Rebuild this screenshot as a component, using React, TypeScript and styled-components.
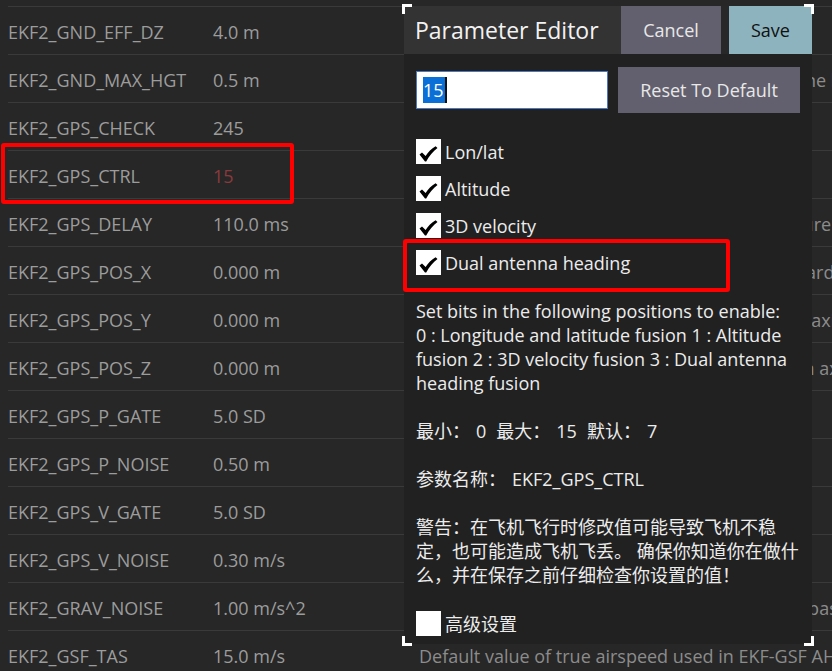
import React from 'react'
import styled, { createGlobalStyle } from 'styled-components'

const GlobalStyle = createGlobalStyle`
  html, body {
    margin: 0;
    padding: 0;
    background: #272727;
    overflow: hidden;
  }
  body {
    font-family: "Open Sans", "Noto Sans CJK SC", sans-serif;
  }
`

type Param = { name: string; value: string; desc: string; modified?: boolean }

const params: Param[] = [
  { name: 'EKF2_GND_EFF_DZ', value: '4.0 m', desc: 'Baro deadzone range for height fusion' },
  { name: 'EKF2_GND_MAX_HGT', value: '0.5 m', desc: 'Maximum height above ground allowed for zone based range aid mode' },
  { name: 'EKF2_GPS_CHECK', value: '245', desc: 'Integer bitmask controlling GPS checks' },
  { name: 'EKF2_GPS_CTRL', value: '15', desc: 'GNSS sensor aiding', modified: true },
  { name: 'EKF2_GPS_DELAY', value: '110.0 ms', desc: 'GPS measurement delay relative to IMU measurements' },
  { name: 'EKF2_GPS_POS_X', value: '0.000 m', desc: 'X position of GPS antenna in body frame (forward axis with origin relative to vehicle centre of gravity)' },
  { name: 'EKF2_GPS_POS_Y', value: '0.000 m', desc: 'Y position of GPS antenna in body frame (right axis with origin relative to vehicle centre of gravity)' },
  { name: 'EKF2_GPS_POS_Z', value: '0.000 m', desc: 'Z position of GPS antenna in body frame (down axis with origin relative to vehicle centre of gravity)' },
  { name: 'EKF2_GPS_P_GATE', value: '5.0 SD', desc: 'Gate size for GNSS position fusion' },
  { name: 'EKF2_GPS_P_NOISE', value: '0.50 m', desc: 'Measurement noise for GNSS position' },
  { name: 'EKF2_GPS_V_GATE', value: '5.0 SD', desc: 'Gate size for GNSS velocity fusion' },
  { name: 'EKF2_GPS_V_NOISE', value: '0.30 m/s', desc: 'Measurement noise for GNSS velocity' },
  { name: 'EKF2_GRAV_NOISE', value: '1.00 m/s^2', desc: 'Accelerometer measurement noise for gravity based observations' },
  { name: 'EKF2_GSF_TAS', value: '15.0 m/s', desc: 'Default value of true airspeed used in EKF-GSF AHRS calculation' },
]

const bits = [
  { label: 'Lon/lat', checked: true },
  { label: 'Altitude', checked: true },
  { label: '3D velocity', checked: true },
  { label: 'Dual antenna heading', checked: true },
]

function CheckMark() {
  return (
    <svg width="19" height="16" viewBox="0 0 19 16">
      <path d="M0.5 8.6 L3 6.4 L6.6 10 C9 6.4 12.5 2.6 16.6 0.3 L18.5 2 C14 5.4 10.2 10 7.2 15.6 L6 15.6 Z" fill="#000" />
    </svg>
  )
}

export default function App() {
  return (
    <>
      <GlobalStyle />
      <Screen>
        <ParamList>
          {params.map(p => (
            <ParamRow key={p.name}>
              <ParamName>{p.name}</ParamName>
              <ParamValue $modified={p.modified}>{p.value}</ParamValue>
              <ParamDesc>{p.desc}</ParamDesc>
            </ParamRow>
          ))}
        </ParamList>

        <Highlight style={{ left: 1, top: 143, width: 293, height: 61 }} />

        <Dialog>
          <Header>
            <Title>Parameter Editor</Title>
            <HeaderButton>Cancel</HeaderButton>
            <HeaderButton $primary>Save</HeaderButton>
          </Header>
          <Body>
            <EditRow>
              <ValueField>
                <Selected>15</Selected>
              </ValueField>
              <ResetButton>Reset To Default</ResetButton>
            </EditRow>

            <BitList>
              {bits.map(b => (
                <CheckRow key={b.label}>
                  <Box>{b.checked && <CheckMark />}</Box>
                  <span>{b.label}</span>
                </CheckRow>
              ))}
            </BitList>

            <TextBlock>
              Set bits in the following positions to enable:<br />
              0 : Longitude and latitude fusion 1 : Altitude<br />
              fusion 2 : 3D velocity fusion 3 : Dual antenna<br />
              heading fusion
            </TextBlock>

            <TextBlock>
              最小：<Num>0</Num>最大：<Num>15</Num>默认：<Num>7</Num>
            </TextBlock>

            <TextBlock>
              参数名称：<Num>EKF2_GPS_CTRL</Num>
            </TextBlock>

            <TextBlock>
              警告：在飞机飞行时修改值可能导致飞机不稳<br />
              定，也可能造成飞机飞丢。 确保你知道你在做什<br />
              么，并在保存之前仔细检查你设置的值！
            </TextBlock>

            <CheckRow>
              <Box />
              <span>高级设置</span>
            </CheckRow>
          </Body>

          <Corner $v="top" $h="left" />
          <Corner $v="top" $h="right" />
          <Corner $v="bottom" $h="left" />
          <Corner $v="bottom" $h="right" />

          <Highlight style={{ left: -1, top: 233, width: 327, height: 53 }} />
        </Dialog>
      </Screen>
    </>
  )
}

const Screen = styled.div`
  position: relative;
  width: 832px;
  height: 671px;
  overflow: hidden;
  background: #272727;
`

const ParamList = styled.div`
  padding: 6px 0 0 8px;
`

const ParamRow = styled.div`
  display: grid;
  grid-template-columns: 205px 206px 1fr;
  align-items: center;
  box-sizing: border-box;
  height: 48px;
  border-top: 1px solid #3a3a3a;
  font-size: 18px;
  color: #9c9c9c;
  white-space: nowrap;
`

const ParamName = styled.div`
  padding-top: 3px;
`

const ParamValue = styled.div<{ $modified?: boolean }>`
  padding-top: 3px;
  color: ${p => (p.$modified ? '#8a3a3c' : '#9c9c9c')};
`

const ParamDesc = styled.div`
  padding-top: 3px;
  overflow: hidden;
  color: #8c8c8c;
`

const Highlight = styled.div`
  position: absolute;
  box-sizing: border-box;
  border: 4px solid #ff0000;
  border-radius: 3px;
  pointer-events: none;
`

const Dialog = styled.div`
  position: absolute;
  left: 404px;
  top: 6px;
  width: 408px;
  height: 638px;
  background: #212121;
  display: flex;
  flex-direction: column;
  color: #ececec;
`

const Header = styled.div`
  display: flex;
  height: 48px;
  gap: 8px;
  background: #282828;
`

const Title = styled.div`
  flex: 1;
  margin-right: -8px;
  background: #333333;
  padding-left: 11px;
  font-size: 23px;
  line-height: 48px;
  color: #f2f2f2;
`

const HeaderButton = styled.div<{ $primary?: boolean }>`
  width: ${p => (p.$primary ? '83px' : '100px')};
  display: flex;
  align-items: center;
  justify-content: center;
  font-size: 18px;
  background: ${p => (p.$primary ? '#8db4be' : '#62606e')};
  color: ${p => (p.$primary ? '#111111' : '#e8e8e8')};
`

const Body = styled.div`
  padding: 13px 12px 0 12px;
  font-size: 18px;
  line-height: 24px;
`

const EditRow = styled.div`
  display: flex;
  align-items: center;
  gap: 10px;
  height: 46px;
`

const ValueField = styled.div`
  box-sizing: border-box;
  width: 192px;
  height: 38px;
  background: #ffffff;
  border: 1px solid #4a79bf;
  display: flex;
  align-items: center;
  padding-left: 6px;
  font-size: 18px;
`

const Selected = styled.span`
  background: #0a6fd6;
  color: #ffffff;
  line-height: 26px;
  padding-right: 1px;
  border-right: 2px solid #111;
`

const ResetButton = styled.div`
  flex: 1;
  height: 46px;
  display: flex;
  align-items: center;
  justify-content: center;
  background: #62606e;
  color: #e8e8e8;
  font-size: 18px;
`

const BitList = styled.div`
  display: flex;
  flex-direction: column;
  gap: 12px;
  margin: 26px 0 24px;
`

const CheckRow = styled.div`
  display: flex;
  align-items: center;
  gap: 4px;
  height: 25px;
  white-space: nowrap;
`

const Box = styled.div`
  width: 25px;
  height: 25px;
  background: #ffffff;
  display: flex;
  align-items: flex-end;
  justify-content: flex-start;
  padding: 0 0 2px 3px;
  box-sizing: border-box;
  flex-shrink: 0;
`

const TextBlock = styled.div`
  white-space: nowrap;
  margin-bottom: 24px;
`

const Num = styled.span`
  margin: 0 10px 0 6px;
`

const Corner = styled.div<{ $v: 'top' | 'bottom'; $h: 'left' | 'right' }>`
  position: absolute;
  width: 10px;
  height: 10px;
  ${p => p.$v}: -2px;
  ${p => p.$h}: -2px;
  border-${p => p.$v}: 3px solid #ffffff;
  border-${p => p.$h}: 3px solid #ffffff;
  box-sizing: border-box;
`
